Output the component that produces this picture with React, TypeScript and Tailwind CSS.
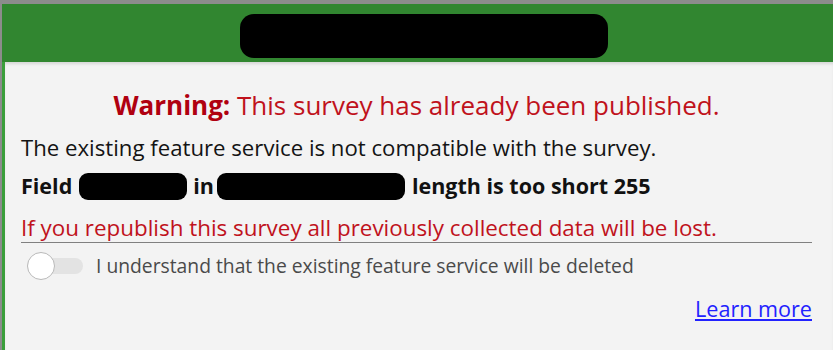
import React from "react";

export default function App() {
  return (
    <div className="w-[833px] h-[350px] overflow-hidden bg-[#8c8c8c] pt-[4px] pl-[2px] flex flex-col font-['Open_Sans',_'Noto_Sans',_sans-serif]">
      <div className="h-[58px] shrink-0 bg-[#318630] flex items-start pl-[238px]">
        <div className="w-[368px] h-[44px] bg-black rounded-[14px] mt-[10px]" />
      </div>
      <div className="flex-1 border-l-[3px] border-[#3b9e3b] bg-[#f3f3f3] shadow-[inset_0_3px_3px_-1px_rgba(0,0,0,0.12)] pl-[16px] pr-[21px] flex flex-col">
        <div className="mt-[28px] h-[30px] leading-[30px] text-center text-[26px] text-[#c0121c] whitespace-nowrap">
          <span className="font-bold text-[#b00010]">Warning:</span> This survey has already been published.
        </div>
        <div className="mt-[13px] h-[30px] leading-[30px] text-[22.2px] text-[#141414] whitespace-nowrap">
          The existing feature service is not compatible with the survey.
        </div>
        <div className="mt-[8px] h-[30px] flex items-center text-[21.5px] font-bold text-[#111] whitespace-nowrap">
          <span>Field</span>
          <span className="ml-[7px] w-[108px] h-[27px] bg-black rounded-[9px]" />
          <span className="ml-[6px]">in</span>
          <span className="ml-[3px] w-[188px] h-[27px] bg-black rounded-[9px]" />
          <span className="ml-[7px]">length is too short 255</span>
        </div>
        <div className="mt-[12px] h-[30px] leading-[30px] text-[22.4px] text-[#c0121c] border-b border-[#808080] whitespace-nowrap">
          If you republish this survey all previously collected data will be lost.
        </div>
        <div className="mt-[8px] h-[30px] flex items-center">
          <div className="relative ml-[6px] w-[56px] h-[28px] flex items-center">
            <div className="w-[56px] h-[16px] rounded-full bg-[#e3e3e3]" />
            <div className="absolute left-0 top-0 w-[28px] h-[28px] rounded-full bg-white border border-[#b9b9b9]" />
          </div>
          <span className="ml-[13px] text-[19.3px] text-[#4a4a4a] whitespace-nowrap">
            I understand that the existing feature service will be deleted
          </span>
        </div>
        <div className="mt-[13px] h-[30px] flex justify-end items-center">
          <a href="#" className="text-[21.6px] text-[#2222ff] underline">Learn more</a>
        </div>
      </div>
    </div>
  );
}
